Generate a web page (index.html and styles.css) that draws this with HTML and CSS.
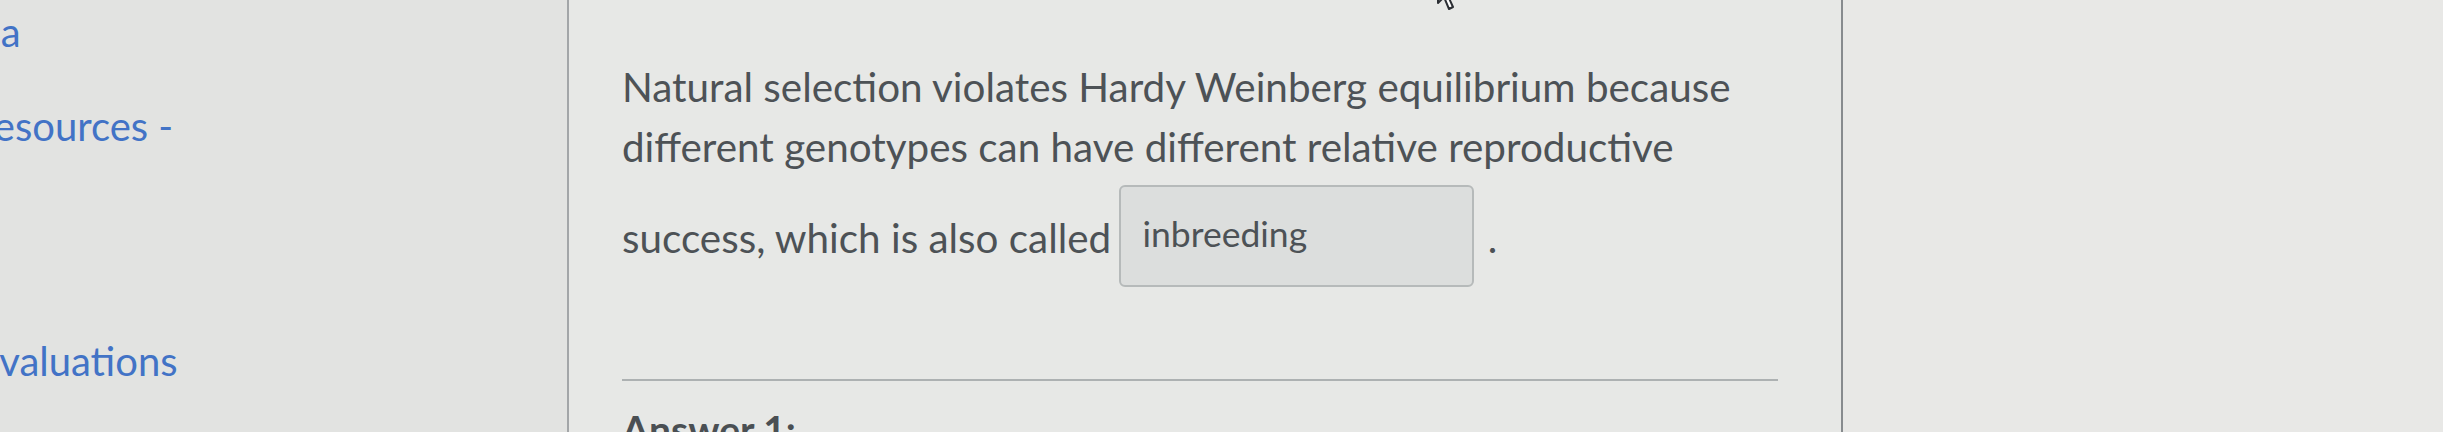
FILE: index.html
```html
<!DOCTYPE html>
<html lang="en">
<head>
<meta charset="utf-8">
<title>Quiz question</title>
<link rel="stylesheet" href="styles.css">
</head>
<body>
<div class="page">
  <nav class="nav">
    <a class="nav-item nav-top" href="#">Media</a>
    <a class="nav-item nav-res" href="#">Resources -</a>
    <a class="nav-item nav-eval" href="#">Evaluations</a>
  </nav>
  <main class="panel">
    <p class="question">Natural selection violates Hardy Weinberg equilibrium because different genotypes can have different relative reproductive success, which is also called <span class="blank">inbreeding</span> .</p>
    <hr class="rule">
    <div class="answer-label">Answer 1:</div>
  </main>
  <div class="side"></div>
</div>
<svg class="cursor" width="26" height="40" viewBox="0 0 26 40" aria-hidden="true">
  <path d="M2 1 L2 27 L8 21 L13 33 L17 31 L12 20 L20 20 Z" fill="#ffffff" stroke="#2b2e33" stroke-width="2" stroke-linejoin="round"/>
</svg>
</body>
</html>
```
FILE: styles.css
```css
html, body {
  margin: 0;
  padding: 0;
  height: 432px;
  overflow: hidden;
  background: #e4e5e3;
  font-family: Lato, "Open Sans", "Liberation Sans", sans-serif;
}

.page {
  display: flex;
  height: 432px;
  width: 2443px;
}

.nav {
  width: 597px;
  margin-left: -30px;
  flex: none;
  display: flex;
  flex-direction: column;
  align-items: flex-start;
  background: #e2e3e1;
}

.nav-item {
  font-size: 40px;
  line-height: 48px;
  color: #4273c6;
  text-decoration: none;
  white-space: nowrap;
}

.nav-top {
  margin-top: 8px;
  margin-left: -59px;
}

.nav-res {
  margin-top: 46px;
}

.nav-eval {
  margin-top: 187px;
  margin-left: 7px;
}

.panel {
  flex: none;
  width: 1219px;
  border-left: 2px solid #a3a6a8;
  border-right: 2px solid #878b8e;
  background: #e7e8e6;
  padding-left: 53px;
  box-sizing: content-box;
}

.question {
  margin: 57px 0 0 0;
  width: 1156px;
  font-size: 40.4px;
  line-height: 60px;
  color: #4d5256;
}

.blank {
  display: inline-block;
  box-sizing: border-box;
  width: 355px;
  height: 102px;
  margin: 8px 4px 0 -3px;
  padding: 17px 0 0 22px;
  border: 2px solid #b6baba;
  border-radius: 6px;
  background: #dcdedd;
  font-size: 35.5px;
  line-height: 60px;
  vertical-align: 6px;
  color: #4d5256;
}

.rule {
  margin: 0;
  margin-top: 92px;
  width: 1156px;
  height: 0;
  border: 0;
  border-top: 2px solid #adb1b2;
}

.answer-label {
  margin-top: 24px;
  font-size: 39px;
  line-height: 48px;
  font-weight: 700;
  color: #4a4f53;
}

.side {
  flex: 1;
  background: #e8e8e6;
}

.cursor {
  position: absolute;
  left: 1436px;
  top: -24px;
}
```
